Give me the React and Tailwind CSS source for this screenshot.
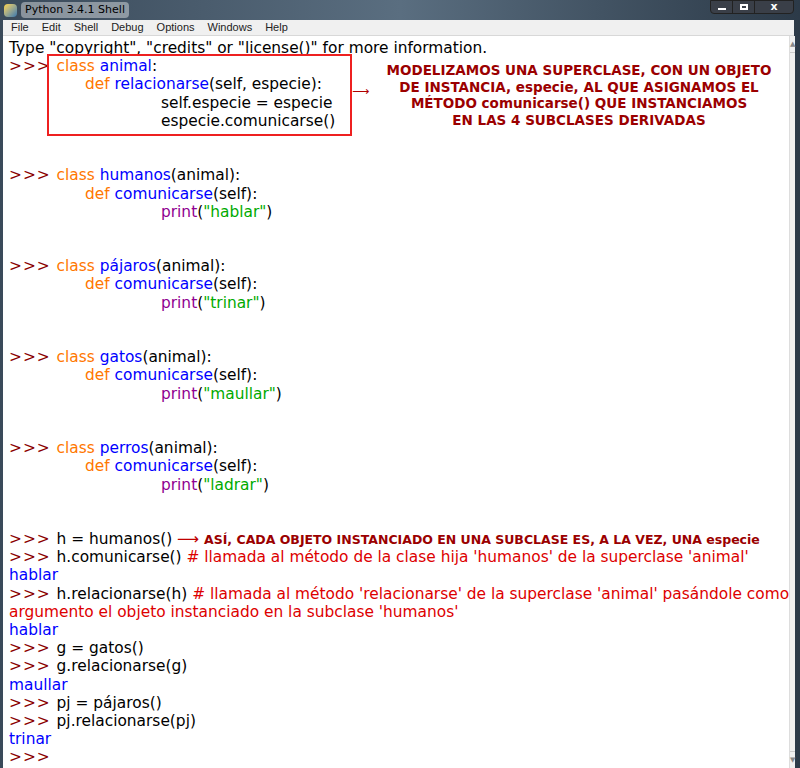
export default function App() {
  const O = ({ c }) => <span className="text-[#ff7700]">{c}</span>;
  const B = ({ c }) => <span className="text-[#0000ff]">{c}</span>;
  const P = ({ c }) => <span className="text-[#900090]">{c}</span>;
  const G = ({ c }) => <span className="text-[#00aa00]">{c}</span>;
  const R = ({ c }) => <span className="text-[#dd0000]">{c}</span>;
  const pr = <span className="text-[#8b0000] tracking-[1px]">&gt;&gt;&gt; </span>;
  const L = ({ children, ind = 0, cls = "" }) => (
    <div className={"h-[18.2px] whitespace-pre " + cls} style={{ paddingLeft: ind * 76 }}>{children}</div>
  );
  const E = () => <div className="h-[18.2px]" />;
  const cls = (name, out) => (
    <>
      <L>{pr}<O c="class " /><B c={name} />(animal):</L>
      <L ind={1}><O c="def " /><B c="comunicarse" />(self):</L>
      <L ind={2}><P c="print" />(<G c={`"${out}"`} />)</L>
      <E /><E />
    </>
  );
  return (
    <div className="w-[800px] h-[768px] overflow-hidden flex flex-col bg-gradient-to-r from-[#3a4a5a] via-[#5a6e80] to-[#2c3a48]" style={{ fontFamily: '"DejaVu Sans", Verdana, sans-serif' }}>
      <div className="h-[20px] flex items-center px-1 relative">
        <div className="w-[13px] h-[13px] bg-gradient-to-br from-[#ffd43b] to-[#3776ab] rounded-sm mr-1" />
        <span className="text-[11px] text-black bg-white/40 px-1 rounded">Python 3.4.1 Shell</span>
        <div className="absolute right-[6px] top-0 flex h-[14px] border border-[#222] rounded-b bg-[#3a3f48]">
          <div className="w-[22px] flex items-center justify-center border-r border-[#222]"><div className="w-[8px] h-[2px] bg-white mt-1" /></div>
          <div className="w-[22px] flex items-center justify-center border-r border-[#222]"><div className="w-[8px] h-[6px] border-2 border-white" /></div>
          <div className="w-[38px] flex items-center justify-center text-white text-[11px] font-bold">x</div>
        </div>
      </div>
      <div className="flex-1 flex flex-col ml-[3px] mr-[6px] bg-white">
        <div className="h-[16px] bg-[#f0f0f0] border-b border-[#d8d8d8] flex items-center gap-[13px] px-[8px] text-[11px] text-[#222]" style={{ fontFamily: '"Liberation Sans", Arial, sans-serif' }}>
          <span>File</span><span>Edit</span><span>Shell</span><span>Debug</span><span>Options</span><span>Windows</span><span>Help</span>
        </div>
        <div className="flex-1 flex">
          <div className="flex-1 relative pl-[6px] pt-[3px] text-[15.4px] leading-[18.2px] text-black">
            <L>Type "copyright", "credits" or "license()" for more information.</L>
            <L>{pr}<O c="class " /><B c="animal" />:</L>
            <L ind={1}><O c="def " /><B c="relacionarse" />(self, especie):</L>
            <L ind={2}>self.especie = especie</L>
            <L ind={2}>especie.comunicarse()</L>
            <E /><E />
            {cls("humanos", "hablar")}
            {cls("pájaros", "trinar")}
            {cls("gatos", "maullar")}
            {cls("perros", "ladrar")}
            <L>{pr}h = humanos() <span className="text-[#c00000]">⟶</span> <span className="text-[#9b0000] font-bold text-[12.5px]">ASÍ, CADA OBJETO INSTANCIADO EN UNA SUBCLASE ES, A LA VEZ, UNA especie</span></L>
            <L>{pr}h.comunicarse() <R c="# llamada al método de la clase hija 'humanos' de la superclase 'animal'" /></L>
            <L><B c="hablar" /></L>
            <L>{pr}h.relacionarse(h) <R c="# llamada al método 'relacionarse' de la superclase 'animal' pasándole como" /></L>
            <L><R c="argumento el objeto instanciado en la subclase 'humanos'" /></L>
            <L><B c="hablar" /></L>
            <L>{pr}g = gatos()</L>
            <L>{pr}g.relacionarse(g)</L>
            <L><B c="maullar" /></L>
            <L>{pr}pj = pájaros()</L>
            <L>{pr}pj.relacionarse(pj)</L>
            <L><B c="trinar" /></L>
            <L>{pr}</L>
            <div className="absolute left-[44px] top-[18px] w-[305px] h-[82px] border-2 border-[#ee2020]" />
            <div className="absolute left-[349px] top-[47px] text-[12px] leading-[16px] text-[#b00000]">⟶</div>
            <div className="absolute left-[360px] top-[26px] w-[432px] text-center text-[13.5px] leading-[16.5px] font-bold text-[#9b0000]">
              MODELIZAMOS UNA SUPERCLASE, CON UN OBJETO<br />DE INSTANCIA, especie, AL QUE ASIGNAMOS EL<br />MÉTODO comunicarse() QUE INSTANCIAMOS<br />EN LAS 4 SUBCLASES DERIVADAS
            </div>
          </div>
          <div className="w-[14px] bg-[#f0f0f0] border-l border-[#ddd] flex flex-col justify-between items-center">
            <div className="h-[17px] w-full flex items-center justify-center text-[7px] text-[#888] border-b border-[#ccc]">▲</div>
            <div className="h-[17px] w-full flex items-center justify-center text-[7px] text-[#888] border-t border-[#ccc]">▼</div>
          </div>
        </div>
      </div>
    </div>
  );
}
